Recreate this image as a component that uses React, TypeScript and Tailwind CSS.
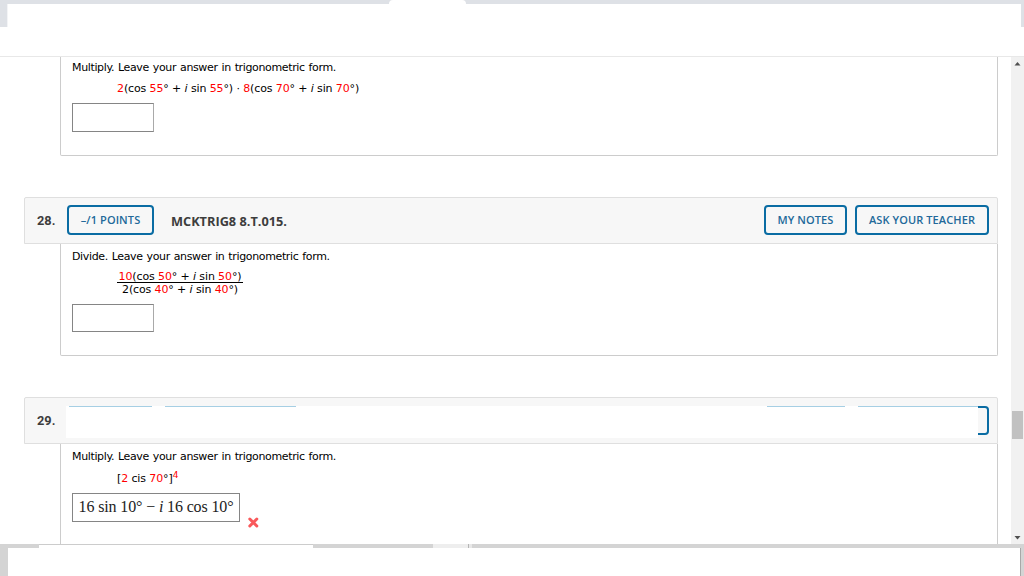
import React from 'react';

const Red: React.FC<{ children: React.ReactNode }> = ({ children }) => (
  <span className="text-[#ff0000]">{children}</span>
);

const Cis: React.FC<{ r: string; angle: string; redRadius?: boolean }> = ({ r, angle, redRadius = true }) => (
  <>
    {redRadius ? <Red>{r}</Red> : r}(cos <Red>{angle}</Red>° + <i>i</i> sin <Red>{angle}</Red>°)
  </>
);

const Prompt: React.FC<{ children: React.ReactNode }> = ({ children }) => (
  <p className="h-[14px] w-fit whitespace-nowrap text-[11px] leading-[14px] tracking-[-0.36px] [word-spacing:0.75px]">
    {children}
  </p>
);

const AnswerBox: React.FC<{ className: string }> = ({ className }) => (
  <div className={`w-[82px] border border-[#858585] border-r-[#a9a9a9] bg-white ${className}`} />
);

const HeaderButton: React.FC<{ className: string; children: React.ReactNode }> = ({ className, children }) => (
  <button
    className={`flex h-[30px] items-center justify-center whitespace-nowrap rounded-[4px] border-2 border-[#0a6ca3] pt-px font-['Open_Sans',sans-serif] text-[11px] font-semibold tracking-[0.1px] text-[#22699a] ${className}`}
  >
    {children}
  </button>
);

const headerStyle =
  "mt-[41px] ml-[24px] flex h-[47px] w-[974px] items-start rounded-t-[2px] border border-[#dfdfdf] bg-[#f7f7f7] font-['Open_Sans',sans-serif] font-bold text-[#3d3d3d]";

const numberStyle = "pt-[13px] pl-[12px] font-['Roboto',sans-serif] text-[12.8px] leading-[20px]";

const Question27: React.FC = () => (
  <section className="ml-[60px] h-[99px] w-[938px] rounded-b-[2px] border-x border-b border-[#cccccc] pl-[11px] pt-[4px]">
    <Prompt>Multiply. Leave your answer in trigonometric form.</Prompt>
    <div className="ml-[45px] mt-[7px] h-[14px] w-fit whitespace-nowrap text-[11px] leading-[14px] tracking-[-0.12px]">
      <Cis r="2" angle="55" /> · <Cis r="8" angle="70" />
    </div>
    <div className="mt-[7px]">
      <AnswerBox className="h-[29px]" />
    </div>
  </section>
);

const Question28: React.FC = () => (
  <>
    <header className={headerStyle}>
      <span className={`w-[42px] ${numberStyle}`}>28.</span>
      <HeaderButton className="mt-[7px] w-[87px]">–/1 POINTS</HeaderButton>
      <span className="ml-[17px] mt-[13px] text-[12.75px] leading-[20px]">MCKTRIG8 8.T.015.</span>
      <div className="ml-auto mt-[7px] flex gap-[8px] pr-[8px]">
        <HeaderButton className="w-[83px]">MY NOTES</HeaderButton>
        <HeaderButton className="w-[134px]">ASK YOUR TEACHER</HeaderButton>
      </div>
    </header>
    <section className="ml-[60px] h-[112px] w-[938px] rounded-b-[2px] border-x border-b border-[#cccccc] pl-[11px] pt-[6px]">
      <Prompt>Divide. Leave your answer in trigonometric form.</Prompt>
      <div className="ml-[45px] mt-[5px] w-[126px] whitespace-nowrap text-center text-[11px] leading-[15px] tracking-[-0.12px]">
        <div className="h-[14px] border-b border-black">
          <Cis r="10" angle="50" />
        </div>
        <div className="h-[14px] leading-[14px]">
          <Cis r="2" angle="40" redRadius={false} />
        </div>
      </div>
      <div className="mt-[7px]">
        <AnswerBox className="h-[28px]" />
      </div>
    </section>
  </>
);

const Question29: React.FC = () => (
  <>
    <header className={headerStyle}>
      <span className={`w-[41px] ${numberStyle}`}>29.</span>
      <div className="mt-[8px] flex h-[32px] w-[912px] items-start bg-white">
        <div className="ml-[3px] h-px w-[83px] bg-[#a6cfe4]" />
        <div className="ml-[13px] h-px w-[131px] bg-[#a6cfe4]" />
        <div className="ml-auto h-px w-[78px] bg-[#a6cfe4]" />
        <div className="ml-[13px] h-px w-[120px] bg-[#a6cfe4]" />
      </div>
      <div className="mt-[8px] h-[29px] w-[11px] rounded-r-[4px] border-y-2 border-r-2 border-[#0a6ca3]" />
    </header>
    <section className="ml-[60px] h-[100px] w-[938px] border-x border-[#cccccc] pl-[11px] pt-[6px]">
      <Prompt>Multiply. Leave your answer in trigonometric form.</Prompt>
      <div className="ml-[45px] mt-[8px] h-[14px] w-fit whitespace-nowrap text-[11px] leading-[14px] tracking-[-0.12px]">
        [<Red>2</Red> cis <Red>70</Red>°]
        <span className="relative top-[-4px] text-[9px] leading-none text-[#ff0000]">4</span>
      </div>
      <div className="mt-[7px] flex items-end">
        <div className="flex h-[29px] w-[168px] items-center justify-center whitespace-nowrap border border-[#858585] pb-[2px] font-['Liberation_Serif',serif] text-[16px] text-[#222222]">
          <span className="tracking-[-0.14px]">
            16 sin 10° − <i>i</i> 16 cos 10°
          </span>
        </div>
        <svg className="mb-[-6px] ml-[8px]" width="11" height="11" viewBox="0 0 11 11">
          <path d="M1.8 2 L8.8 9 M8.8 2 L1.8 9" stroke="#f9595b" strokeWidth="3" strokeLinecap="round" />
        </svg>
      </div>
    </section>
  </>
);

const ScrollBar: React.FC = () => (
  <div className="flex w-[13px] flex-col items-center bg-[#f1f1f1]">
    <svg className="mt-[5px]" width="7" height="4" viewBox="0 0 7 4">
      <path d="M3.5 0 L6.5 3.5 H0.5 Z" fill="#505050" />
    </svg>
    <div className="mt-[345px] h-[28px] w-[11px] bg-[#c1c1c1]" />
    <svg className="mb-[4px] mt-auto" width="7" height="4" viewBox="0 0 7 4">
      <path d="M0.5 0 H6.5 L3.5 3.5 Z" fill="#505050" />
    </svg>
  </div>
);

const App: React.FC = () => {
  return (
    <div className="flex h-[576px] w-[1024px] flex-col overflow-hidden bg-white font-['DejaVu_Sans',sans-serif] text-black">
      <div className="h-[27px] bg-[#dee1e6]">
        <div className="ml-[389px] h-[4px] w-[77px] rounded-t-[4px] bg-white" />
        <div className="ml-[7px] mr-[3px] h-[23px] border-l border-[#f3f4f6] bg-white" />
      </div>
      <div className="h-[30px] border-b border-[#e8e8e8]" />

      <div className="flex h-[487px]">
        <main className="w-[1011px]">
          <Question27 />
          <Question28 />
          <Question29 />
        </main>
        <ScrollBar />
      </div>

      <div className="flex h-[4px] bg-[#d4d4d4]">
        <div className="ml-[39px] h-[4px] w-[274px] border-t border-[#cccccc] bg-white" />
        <div className="ml-[120px] w-[35px] bg-[#eeeeee]" />
        <div className="w-px bg-[#b5b5b5]" />
        <div className="w-[3px] bg-[#e8e8e8]" />
      </div>
      <div className="flex h-[28px] bg-[#d4d4d4]">
        <div className="ml-[8px] w-[1012px] bg-white" />
        <div className="w-px bg-[#a8a8a8]" />
      </div>
    </div>
  );
};

export default App;
